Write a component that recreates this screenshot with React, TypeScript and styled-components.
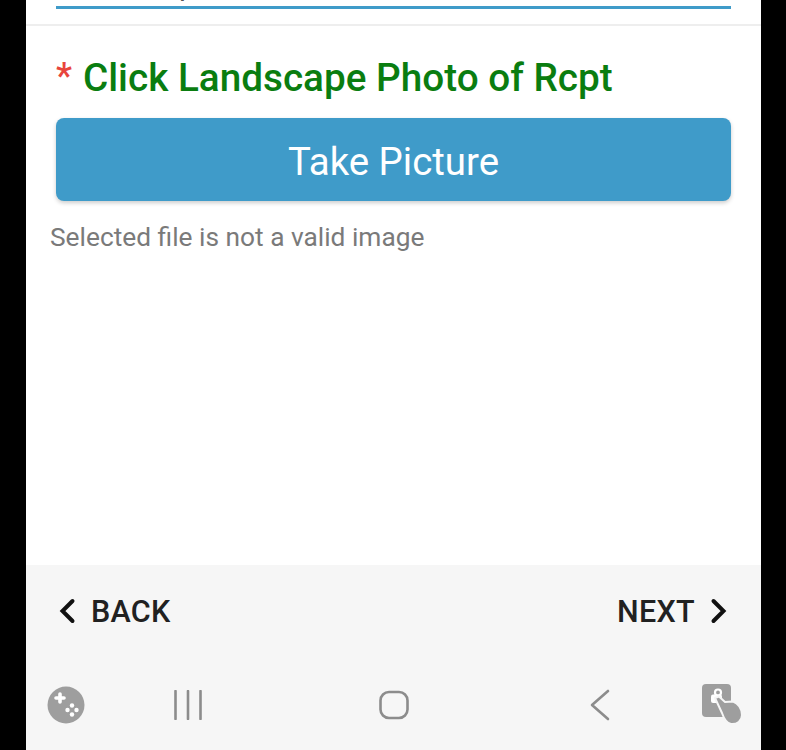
import React from "react";
import styled, { createGlobalStyle } from "styled-components";

const GlobalStyle = createGlobalStyle`
  html, body {
    margin: 0;
    padding: 0;
    background: #000;
  }
`;

const Page = styled.div`
  width: 786px;
  height: 750px;
  overflow: hidden;
  background: #000;
  padding: 0 25px 0 26px;
  box-sizing: border-box;
`;

const Screen = styled.div`
  height: 100%;
  display: flex;
  flex-direction: column;
  background: #fff;
  font-family: Roboto, "Liberation Sans", sans-serif;
`;

const TopBar = styled.div`
  position: relative;
  overflow: hidden;
  height: 26px;
  padding: 6px 30px 0;
  box-sizing: border-box;
  border-bottom: 2px solid #eeeeee;
  flex-shrink: 0;
`;

/* descender of the label scrolled off above the rule */
const ClippedLabel = styled.span`
  position: absolute;
  left: 153px;
  top: -33px;
  font-size: 30px;
  line-height: 36px;
  color: #555;
`;

const TopRule = styled.div`
  height: 3px;
  background: #3f9bc9;
`;

const Content = styled.div`
  flex: 1;
  padding: 0 30px;
`;

const Title = styled.h2`
  margin: 29px 0 0;
  height: 44px;
  display: flex;
  align-items: center;
  gap: 11px;
  font-size: 38.7px;
  font-weight: 500;
  color: #0a7d10;
  white-space: nowrap;
`;

const Star = styled.span`
  color: #e8453c;
  font-size: 36px;
  font-weight: 500;
  position: relative;
  top: -1px;
`;

const PictureButton = styled.button`
  display: block;
  width: 100%;
  height: 83px;
  margin-top: 19px;
  padding: 3px 0 0;
  border: none;
  border-radius: 8px;
  background: #3f9bc9;
  box-shadow: 0 2px 4px rgba(0, 0, 0, 0.2);
  color: #fff;
  font-family: inherit;
  font-size: 38.4px;
  font-weight: 400;
`;

const ErrorText = styled.div`
  margin: 20px 0 0 -6px;
  height: 32px;
  line-height: 32px;
  font-size: 26.3px;
  color: #7a7a7a;
`;

const Footer = styled.div`
  flex-shrink: 0;
  height: 185px;
  background: #f6f6f6;
  display: flex;
  flex-direction: column;
`;

const StepRow = styled.div`
  display: flex;
  justify-content: space-between;
  align-items: center;
  height: 92px;
  padding: 0 32px 0 31px;
`;

const StepLink = styled.div`
  display: flex;
  align-items: center;
  gap: 15px;
  font-size: 30.5px;
  font-weight: 500;
  color: #212121;
  letter-spacing: 0.3px;
`;

const NavRow = styled.div`
  display: flex;
  justify-content: space-between;
  align-items: center;
  height: 56px;
  margin-top: 20px;
  padding: 0 19px 0 21px;
`;

const NavGroup = styled.div`
  display: flex;
  gap: 176px;
  align-items: center;
`;

const NavSlot = styled.div`
  width: 30px;
  height: 40px;
  display: flex;
  align-items: center;
  justify-content: center;
`;

const Chevron = ({ dir }: { dir: "left" | "right" }) => (
  <svg width="19" height="26" viewBox="0 0 19 26" fill="none">
    <path
      d={dir === "left" ? "M15.5 3 L5.5 13 L15.5 23" : "M3.5 3 L13.5 13 L3.5 23"}
      stroke="#111"
      strokeWidth="4"
      strokeLinecap="round"
      strokeLinejoin="miter"
    />
  </svg>
);

const GameIcon = () => (
  <svg width="38" height="38" viewBox="0 0 38 38">
    <circle cx="19" cy="19" r="18.5" fill="#9e9e9e" />
    <path d="M13 8 v8 M9 12 h8" stroke="#fff" strokeWidth="3.6" strokeLinecap="round" />
    <circle cx="25" cy="19.5" r="2.2" fill="#fff" />
    <circle cx="20.5" cy="24" r="2.2" fill="#fff" />
    <circle cx="29.5" cy="24" r="2.2" fill="#fff" />
    <circle cx="25" cy="28.5" r="2.2" fill="#fff" />
  </svg>
);

const RecentsIcon = () => (
  <svg width="30" height="30" viewBox="0 0 30 30">
    <path d="M2.5 1 V29 M15 1 V29 M27.5 1 V29" stroke="#8c8c8c" strokeWidth="2.6" strokeLinecap="round" />
  </svg>
);

const HomeIcon = () => (
  <svg width="30" height="30" viewBox="0 0 30 30" fill="none">
    <rect x="1.5" y="2" width="27" height="26" rx="8.5" stroke="#8c8c8c" strokeWidth="2.6" />
  </svg>
);

const BackIcon = () => (
  <svg width="20" height="32" viewBox="0 0 20 32" fill="none">
    <path d="M18 2 L2 16 L18 30" stroke="#8c8c8c" strokeWidth="2.6" strokeLinecap="round" strokeLinejoin="round" />
  </svg>
);

const TouchLockIcon = () => (
  <svg width="40" height="42" viewBox="0 0 40 42">
    <rect x="0" y="0" width="29" height="33" rx="4" fill="#9e9e9e" />
    <circle cx="16" cy="8.5" r="3" fill="none" stroke="#fff" strokeWidth="2.2" />
    <rect x="9" y="10.5" width="11" height="8.5" rx="2" fill="#fff" />
    <path
      d="M13 14 L17 12.5 L23 18 L31 17.5 C36 19 40 25 40 31 C40 37 35 40.5 29 40 C24 39 22 35 20 29 Z"
      fill="#9e9e9e"
      stroke="#f6f6f6"
      strokeWidth="2"
      strokeLinejoin="round"
    />
  </svg>
);

export default function App() {
  return (
    <>
      <GlobalStyle />
      <Page>
        <Screen>
          <TopBar>
            <ClippedLabel>p</ClippedLabel>
            <TopRule />
          </TopBar>
          <Content>
            <Title>
              <Star>*</Star>
              Click Landscape Photo of Rcpt
            </Title>
            <PictureButton>Take Picture</PictureButton>
            <ErrorText>Selected file is not a valid image</ErrorText>
          </Content>
          <Footer>
            <StepRow>
              <StepLink>
                <Chevron dir="left" />
                BACK
              </StepLink>
              <StepLink>
                NEXT
                <Chevron dir="right" />
              </StepLink>
            </StepRow>
            <NavRow>
              <GameIcon />
              <NavGroup>
                <NavSlot><RecentsIcon /></NavSlot>
                <NavSlot><HomeIcon /></NavSlot>
                <NavSlot><BackIcon /></NavSlot>
              </NavGroup>
              <TouchLockIcon />
            </NavRow>
          </Footer>
        </Screen>
      </Page>
    </>
  );
}
